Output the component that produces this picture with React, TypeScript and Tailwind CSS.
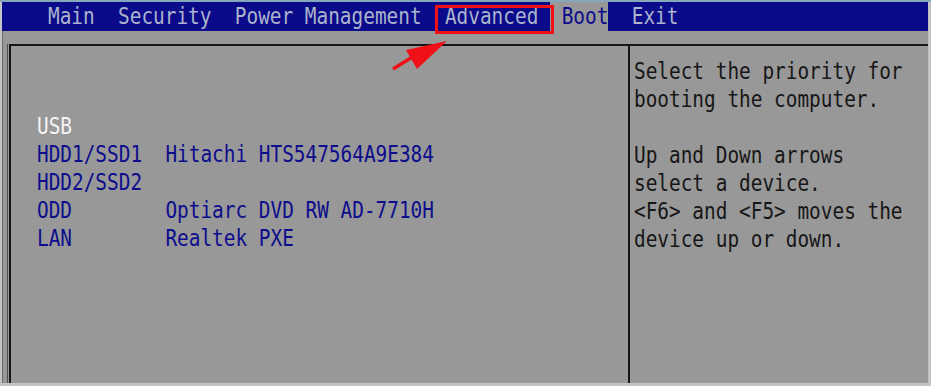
import React from "react";

const mono = { fontFamily: '"DejaVu Sans Mono", "Liberation Mono", monospace' };

function L({ children, className = "" }: { children: React.ReactNode; className?: string }) {
  return <div className={"scale-y-[1.18] " + className}>{children}</div>;
}

export default function App() {
  return (
    <div
      className="relative w-[931px] h-[386px] overflow-hidden bg-[#c4c4c4] flex flex-col pl-[2px] pr-[3px] pb-[3px]"
      style={mono}
    >
      <div className="h-[2px] -ml-[2px] -mr-[3px] bg-[#86a6bc]" />
      {/* menu bar */}
      <div className="h-[29px] bg-[#0b0a8a] text-[#aab4cc] text-[19.4px] leading-[29px] whitespace-pre pl-[46px] flex">
        <span className="inline-block scale-y-[1.18]">{"Main  Security  Power Management  Advanced "}</span>
        <span className="bg-[#989898] text-[#0b0a8a]">
          <span className="inline-block scale-y-[1.18]">{" Boot"}</span>
        </span>
        <span className="inline-block scale-y-[1.18]">{"  Exit"}</span>
      </div>
      {/* body */}
      <div className="flex-1 flex flex-col bg-[#989898] border-l border-[#6a6a6a]">
        <div className="h-[13px]" />
        <div className="flex-1 flex pl-[4px]">
          <div className="w-px bg-[#505050]" />
          <div className="w-px" />
          <div className="flex-1 flex border-t-2 border-l-2 border-[#161616]">
            <div className="w-[617px] pl-[26px] pt-[67px] text-[19.4px] leading-[28px] whitespace-pre text-[#0c0c8c]">
              <L className="text-[#f4f4f4]">USB</L>
              <L>{"HDD1/SSD1  Hitachi HTS547564A9E384"}</L>
              <L>HDD2/SSD2</L>
              <L>{"ODD        Optiarc DVD RW AD-7710H"}</L>
              <L>{"LAN        Realtek PXE"}</L>
            </div>
            <div className="w-[2px] bg-[#161616]" />
            <div className="flex-1 pl-[4px] pt-[12px] text-[19.4px] leading-[28px] whitespace-pre text-[#161616]">
              <L>Select the priority for</L>
              <L>booting the computer.</L>
              <L>{" "}</L>
              <L>Up and Down arrows</L>
              <L>select a device.</L>
              <L>{"<F6> and <F5> moves the"}</L>
              <L>device up or down.</L>
            </div>
          </div>
        </div>
      </div>
      {/* red highlight box */}
      <div className="absolute left-[435px] top-[5px] w-[119px] h-[29px] border-[3px] border-[#f01018]" />
      {/* red arrow */}
      <svg className="absolute left-0 top-0" width="931" height="386" viewBox="0 0 931 386">
        <line x1="393" y1="69" x2="414" y2="56" stroke="#f01018" strokeWidth="3.5" />
        <polygon points="447,41 406,50 417,69" fill="#f01018" />
      </svg>
    </div>
  );
}
